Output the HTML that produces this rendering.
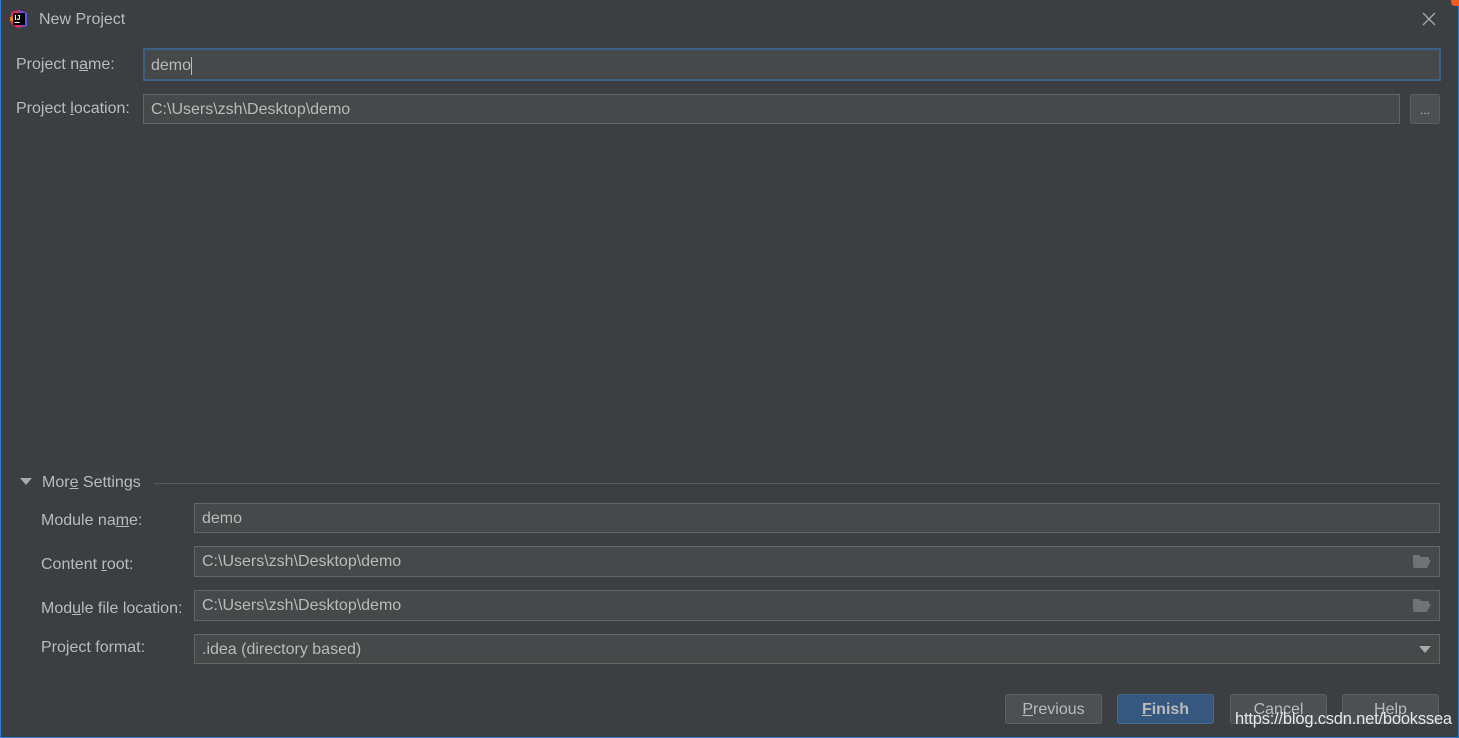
<!DOCTYPE html>
<html><head><meta charset="utf-8"><style>
*{box-sizing:border-box;margin:0;padding:0}
body{width:1459px;height:738px;background:#3c3f41;font-family:"Liberation Sans","Noto Sans CJK SC",sans-serif;font-size:16px;color:#bbbbbb;position:relative;overflow:hidden}
.frame{position:absolute;left:0;top:0;width:1459px;height:738px;border:1px solid #2f7dd6;border-top:none}
.a{position:absolute}
.inp{position:absolute;background:#45494a;border:1px solid #646464;padding-left:7px;line-height:29px;color:#bbbbbb}
.lbl{position:absolute;line-height:20px}
.btn{position:absolute;top:694px;width:97px;height:30px;border:1px solid #5e6060;border-radius:3px;background:#4c5052;text-align:center;line-height:30px;color:#bbbbbb}
u{text-decoration:underline}
</style></head><body>
<div class="frame"></div>
<svg class="a" style="left:9px;top:9px" width="20" height="20" viewBox="0 0 20 20"><polygon points="2,3 10,1 18,4 18,17 9,19 2,15" fill="#e2296d"/><polygon points="10,1 18,4 18,17 12,18" fill="#5c55f0"/><polygon points="1,8 5,7 5,13 1,12" fill="#f57e20"/><rect x="4" y="4" width="12" height="12" fill="#000"/><text x="5.5" y="11" font-size="7" fill="#fff" font-family="Liberation Sans" font-weight="bold">IJ</text><rect x="5.5" y="13" width="5" height="1" fill="#fff"/></svg>
<div class="lbl" style="left:39px;top:10px">New Project</div>
<svg class="a" style="left:1421px;top:11px" width="16" height="16"><path d="M2 2L14 14M14 2L2 14" stroke="#a8a8a8" stroke-width="1.3"/></svg>
<div class="a" style="left:1451px;top:0;width:8px;height:6px;background:#f05a1e;border-radius:0 0 0 4px"></div>
<div class="lbl" style="left:16px;top:55px">Project n<u>a</u>me:</div>
<div class="inp" style="left:143px;top:48px;width:1298px;height:33px;border:2px solid #3d6185;line-height:31px;padding-left:6px">demo<span style="display:inline-block;width:1px;height:18px;background:#bbb;vertical-align:middle"></span></div>
<div class="lbl" style="left:16px;top:99px">Project <u>l</u>ocation:</div>
<div class="inp" style="left:143px;top:94px;width:1257px;height:30px">C:\Users\zsh\Desktop\demo</div>
<div class="a" style="left:1410px;top:94px;width:30px;height:30px;border:1px solid #5e6060;border-radius:3px;background:#4c5052;text-align:center;line-height:30px;font-size:12px">...</div>
<svg class="a" style="left:19px;top:477px" width="14" height="10"><polygon points="1,1 13,1 7,8" fill="#a8a8a8"/></svg>
<div class="lbl" style="left:42px;top:473px">Mor<u>e</u> Settings</div>
<div class="a" style="left:154px;top:483px;width:1286px;height:1px;background:#555859"></div>
<div class="lbl" style="left:41px;top:511px">Module na<u>m</u>e:</div>
<div class="inp" style="left:194px;top:503px;width:1246px;height:30px">demo</div>
<div class="lbl" style="left:41px;top:555px">Content <u>r</u>oot:</div>
<div class="inp" style="left:194px;top:546px;width:1246px;height:31px">C:\Users\zsh\Desktop\demo</div>
<div class="lbl" style="left:41px;top:599px">Mod<u>u</u>le file location:</div>
<div class="inp" style="left:194px;top:590px;width:1246px;height:31px">C:\Users\zsh\Desktop\demo</div>
<svg class="a" style="left:1412px;top:553px" width="20" height="16"><path d="M1 2h6l2 2h8v3H5L1 14z" fill="#6e7476"/><path d="M5 7h14l-4 8H1z" fill="#6e7476"/></svg>
<svg class="a" style="left:1412px;top:597px" width="20" height="16"><path d="M1 2h6l2 2h8v3H5L1 14z" fill="#6e7476"/><path d="M5 7h14l-4 8H1z" fill="#6e7476"/></svg>
<div class="lbl" style="left:41px;top:638px">Project format:</div>
<div class="inp" style="left:194px;top:634px;width:1246px;height:30px">.idea (directory based)</div>
<svg class="a" style="left:1418px;top:645px" width="14" height="10"><polygon points="1,1 13,1 7,8" fill="#a8a8a8"/></svg>
<div class="btn" style="left:1005px"><u>P</u>revious</div>
<div class="btn" style="left:1117px;background:#365880;border-color:#43688c;font-weight:bold"><u>F</u>inish</div>
<div class="btn" style="left:1230px">Cancel</div>
<div class="btn" style="left:1342px">Help</div>
<div class="a" style="left:1235px;top:710px;font-size:16.5px;color:#e8e8e8;line-height:18px;letter-spacing:-0.2px">https://blog.csdn.net/bookssea</div>
</body></html>
